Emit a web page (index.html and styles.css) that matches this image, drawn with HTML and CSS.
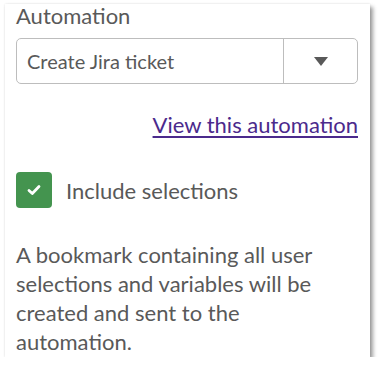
FILE: index.html
```html
<!DOCTYPE html>
<html>
<head>
<meta charset="utf-8">
<link rel="stylesheet" href="styles.css">
</head>
<body>
<div class="panel">
  <div class="label">Automation</div>
  <div class="select">
    <div class="select-value">Create Jira ticket</div>
    <div class="select-arrow">
      <svg width="14" height="9" viewBox="0 0 14 9"><path d="M0 0 H14 L7 9 Z" fill="#595959"/></svg>
    </div>
  </div>
  <div class="link-row"><a class="link" href="#">View this automation</a></div>
  <div class="check-row">
    <div class="checkbox">
      <svg width="14" height="12" viewBox="0 0 14 12"><path d="M2 6.5 L5.3 9.5 L12 2.5" fill="none" stroke="#fff" stroke-width="2.8" stroke-linecap="round" stroke-linejoin="round"/></svg>
    </div>
    <div class="check-label">Include selections</div>
  </div>
  <p class="desc">A bookmark containing all user selections and variables will be created and sent to the automation.</p>
</div>
</body>
</html>
```
FILE: styles.css
```css
html, body {
  margin: 0;
  padding: 0;
  background: #fff;
}
body {
  padding: 4px 0 0 5px;
  font-family: Lato, "Open Sans", sans-serif;
  color: #595959;
}
.panel {
  width: 365px;
  height: 353px;
  box-sizing: border-box;
  background: #fff;
  box-shadow: 0 0 2px rgba(0,0,0,0.12), 3px 3px 4px rgba(0,0,0,0.38);
  padding: 0 12px 0 11px;
  display: flow-root;
}
.label {
  font-size: 22px;
  line-height: 22px;
  margin-top: 1px;
}
.select {
  margin-top: 11px;
  height: 46px;
  box-sizing: border-box;
  border: 1px solid #bdbdbd;
  border-radius: 5px;
  display: flex;
  align-items: stretch;
}
.select-value {
  flex: 1;
  font-size: 20px;
  display: flex;
  align-items: center;
  padding-left: 10px;
  border-right: 1px solid #bdbdbd;
}
.select-arrow {
  width: 73px;
  display: flex;
  align-items: center;
  justify-content: center;
}
.link-row {
  display: flex;
  justify-content: flex-end;
  margin-top: 28px;
  line-height: 26px;
}
.link {
  font-size: 22px;
  line-height: 26px;
  color: #4b2a8c;
  text-decoration: underline;
  text-decoration-thickness: 2px;
  text-underline-offset: 3px;
}
.check-row {
  display: flex;
  align-items: center;
  margin-top: 34px;
}
.checkbox {
  width: 36px;
  height: 36px;
  border-radius: 4px;
  background: #44944f;
  display: flex;
  align-items: center;
  justify-content: center;
}
.check-label {
  font-size: 22px;
  margin-left: 14px;
}
.desc {
  margin: 32px 0 0 0;
  font-size: 22px;
  line-height: 29px;
}
```
